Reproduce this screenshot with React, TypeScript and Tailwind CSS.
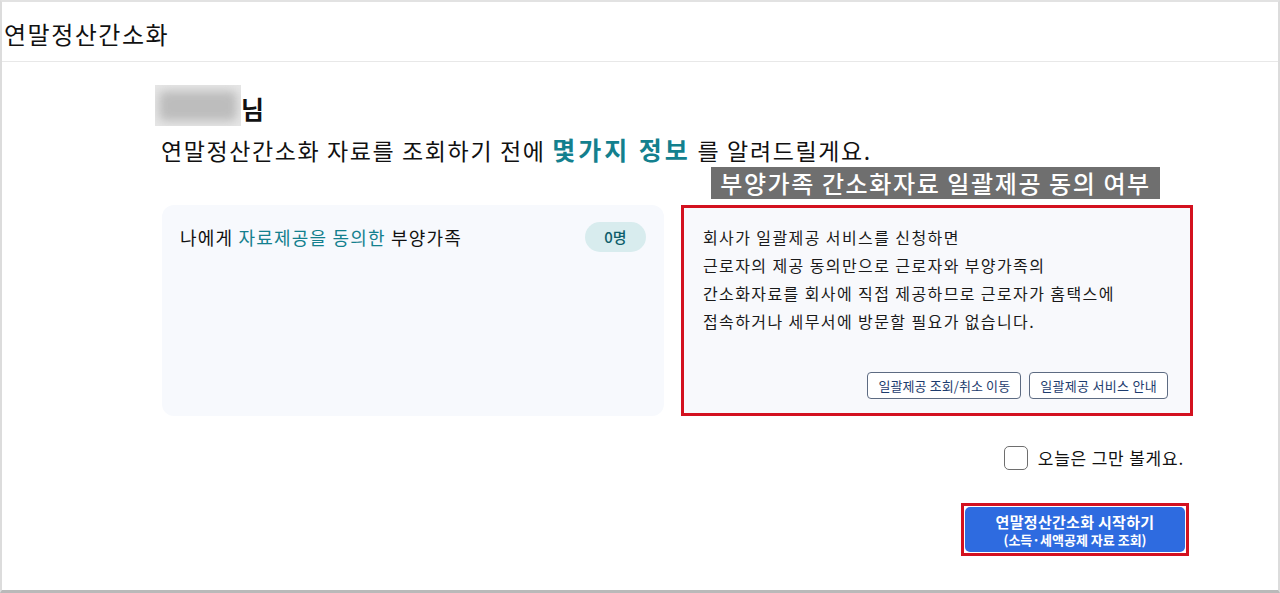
import React from "react";

const font = { fontFamily: '"Noto Sans CJK KR", "Noto Sans", sans-serif' };

export default function App() {
  return (
    <div
      className="w-[1280px] h-[593px] bg-white border-t-2 border-l-2 border-r-2 border-b-[3px] border-t-[#e2e2e2] border-l-[#dcdcdc] border-r-[#dcdcdc] border-b-[#b9b9b9] overflow-hidden text-[#111]"
      style={font}
    >
      {/* header */}
      <div className="h-[60px] border-b border-[#e8e8e8] pl-[2px] pt-[16px] text-[24px] leading-[32px] tracking-[1.5px]">
        연말정산간소화
      </div>

      <div className="ml-[153px] w-[1038px] pt-[23px]">
        {/* name */}
        <div className="flex items-end h-[41px]">
          <div className="w-[86px] h-[41px] bg-[#e6e6e6] flex items-center justify-center overflow-hidden">
            <div className="w-[78px] h-[30px] bg-[#bdbdbd] rounded-md blur-[5px]" />
          </div>
          <span className="text-[25px] leading-[32px] font-bold pb-[2px]">님</span>
        </div>

        {/* intro line */}
        <div className="ml-[6px] mt-[9px] text-[23px] leading-[28px] tracking-[1.6px] flex items-baseline">
          <span>연말정산간소화 자료를 조회하기 전에&nbsp;</span>
          <span className="text-[25px] font-bold text-[#13808e] tracking-[3px]">몇가지 정보</span>
          <span>&nbsp;를 알려드릴게요.</span>
        </div>

        {/* label */}
        <div className="flex mt-[3px]">
          <div className="ml-[556px] w-[449px] h-[32px] bg-[#6f6f6f] text-white text-[24px] leading-[32px] font-medium text-center tracking-[1.6px]">
            부양가족 간소화자료 일괄제공 동의 여부
          </div>
        </div>

        {/* cards */}
        <div className="flex ml-[7px] mt-[6px] gap-[17px] h-[211px]">
          <div className="w-[502px] h-full bg-[#f7f9fd] rounded-[12px] pl-[18px] pr-[18px] pt-[17px]">
            <div className="flex items-center justify-between">
              <div className="text-[18px] leading-[30px] tracking-[1.2px]">
                나에게 <span className="text-[#13808e]">자료제공을 동의한</span> 부양가족
              </div>
              <div className="w-[61px] h-[30px] rounded-full bg-[#d8ecee] text-[#0e5e6b] text-[15px] font-medium flex items-center justify-center">
                0명
              </div>
            </div>
          </div>

          <div className="w-[512px] h-full border-[3px] border-[#d3111f] bg-[#f8f9fc] pl-[19px] pr-[22px] pt-[15px] pb-[14px] flex flex-col justify-between">
            <div className="text-[16px] leading-[28px] tracking-[1.4px] text-[#1a1a1a]">
              <p>회사가 일괄제공 서비스를 신청하면</p>
              <p>근로자의 제공 동의만으로 근로자와 부양가족의</p>
              <p>간소화자료를 회사에 직접 제공하므로 근로자가 홈택스에</p>
              <p>접속하거나 세무서에 방문할 필요가 없습니다.</p>
            </div>
            <div className="flex justify-end gap-[8px]">
              <button className="h-[27px] px-[10px] border border-[#5d6b82] rounded-[4px] bg-white text-[13px] text-[#1d3c6e] tracking-[0.1px]">
                일괄제공 조회/취소 이동
              </button>
              <button className="h-[27px] px-[10px] border border-[#5d6b82] rounded-[4px] bg-white text-[13px] text-[#1d3c6e] tracking-[0.3px]">
                일괄제공 서비스 안내
              </button>
            </div>
          </div>
        </div>

        {/* checkbox */}
        <div className="flex justify-end items-center mt-[30px] pr-[9px] gap-[10px]">
          <div className="w-[24px] h-[24px] border border-[#6e6e6e] rounded-[5px] bg-white" />
          <span className="text-[17px] leading-[24px] tracking-[0.8px]">오늘은 그만 볼게요.</span>
        </div>

        {/* start button */}
        <div className="flex justify-end mt-[33px] pr-[4px]">
          <div className="w-[228px] h-[53px] border-[3px] border-[#d3111f] p-[1px]">
            <button className="w-full h-full bg-[#2e6be0] rounded-[5px] text-white font-bold flex flex-col items-center justify-center">
              <span className="text-[15px] leading-[19px] tracking-[0.3px]">연말정산간소화 시작하기</span>
              <span className="text-[13px] leading-[17px]">(소득·세액공제 자료 조회)</span>
            </button>
          </div>
        </div>
      </div>
    </div>
  );
}
